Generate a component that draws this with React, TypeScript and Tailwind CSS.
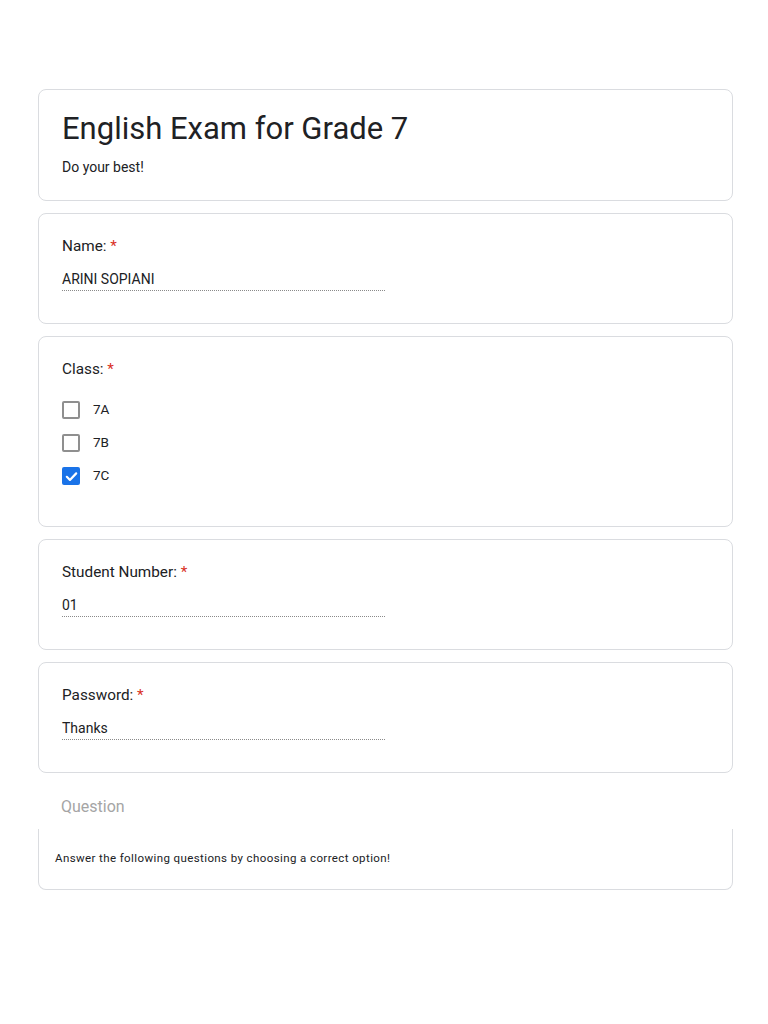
import React from "react";

type Field = { label: string; value: string };

const fields: Record<string, Field> = {
  name: { label: "Name:", value: "ARINI SOPIANI" },
  number: { label: "Student Number:", value: "01" },
  password: { label: "Password:", value: "Thanks" },
};

const classes = [
  { id: "7A", checked: false },
  { id: "7B", checked: false },
  { id: "7C", checked: true },
];

export default function App() {
  return (
    <div className="min-h-[1024px] bg-white font-['Roboto',sans-serif] text-[#202124]">
      <div className="ml-[38px] w-[695px] pt-[89px] flex flex-col gap-3">
        <Card className="h-[112px] pt-[19px]">
          <h1 className="text-[31px] leading-[40px] font-normal tracking-[0px]">
            English Exam for Grade 7
          </h1>
          <p className="mt-[9px] text-[14px] leading-[18px]">Do your best!</p>
        </Card>

        <TextQuestion field={fields.name} />

        <Card className="h-[191px] pt-[22px]">
          <Label text="Class:" />
          <div className="mt-[22px] flex flex-col gap-[15px]">
            {classes.map((c) => (
              <div key={c.id} className="flex items-center gap-[13px]">
                <Checkbox checked={c.checked} />
                <span className="text-[13.5px] leading-[18px] -mt-[3px]">{c.id}</span>
              </div>
            ))}
          </div>
        </Card>

        <TextQuestion field={fields.number} />
        <TextQuestion field={fields.password} />
      </div>

      <div className="ml-[38px] w-[695px]">
        <div className="pl-[23px] pt-[24px] pb-[12px] text-[16px] leading-[20px] text-[#a5a5a5]">
          Question
        </div>
        <div className="h-[61px] border-x border-b border-[#dadce0] rounded-b-[8px] pl-[16px] pt-[21px]">
          <p className="text-[11.5px] leading-[16px] tracking-[0.4px]">
            Answer the following questions by choosing a correct option!
          </p>
        </div>
      </div>
    </div>
  );
}

function Card({ className, children }: { className?: string; children: React.ReactNode }) {
  return (
    <div className={`border border-[#dadce0] rounded-[8px] px-[23px] ${className ?? ""}`}>
      {children}
    </div>
  );
}

function Label({ text }: { text: string }) {
  return (
    <div className="text-[15.3px] leading-[20px]">
      {text} <span className="text-[#d93025]">*</span>
    </div>
  );
}

function TextQuestion({ field }: { field: Field }) {
  return (
    <Card className="h-[111px] pt-[22px]">
      <Label text={field.label} />
      <div className="mt-[14px] w-[323px] border-b border-dotted border-[#8a8a8a] pb-[2px] text-[14px] leading-[18px]">
        {field.value}
      </div>
    </Card>
  );
}

function Checkbox({ checked }: { checked: boolean }) {
  if (checked) {
    return (
      <div className="w-[18px] h-[18px] rounded-[2px] bg-[#1a73e8] flex items-center justify-center">
        <svg width="15" height="15" viewBox="0 0 24 24" fill="none" aria-hidden>
          <path d="M4.5 12.5l5 5L19.5 7" stroke="white" strokeWidth="3.5" strokeLinecap="round" strokeLinejoin="round" />
        </svg>
      </div>
    );
  }
  return <div className="w-[18px] h-[18px] rounded-[2px] border-2 border-[#8f8f8f]" />;
}
